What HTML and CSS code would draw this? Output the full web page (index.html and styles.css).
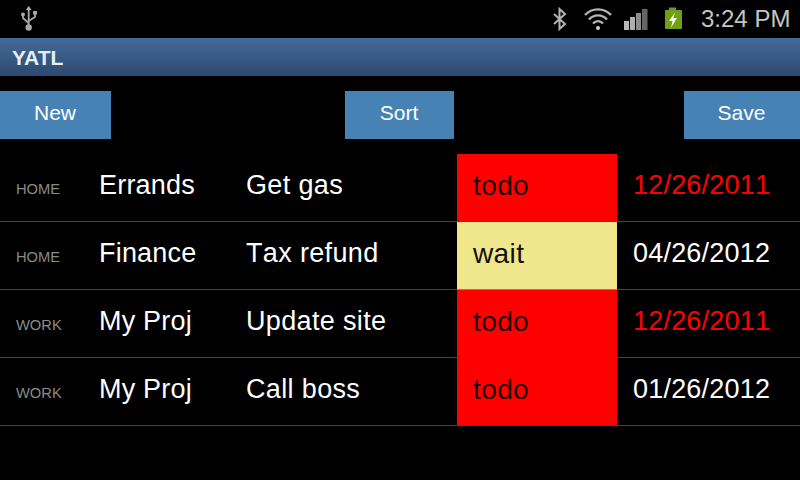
FILE: index.html
```html
<!DOCTYPE html>
<html lang="en">
<head>
    <meta charset="UTF-8">
    <meta name="viewport" content="width=device-width, initial-scale=1.0">
    <title>YATL</title>
    <link rel="stylesheet" href="styles.css">
</head>
<body>
    <div class="status-bar">
        <svg class="icon-usb" width="18" height="26" viewBox="0 0 18 26">
            <g fill="none" stroke="#a8a8a8" stroke-width="1.8">
                <path d="M8.7 3 V21"/>
                <path d="M3 9 V12 L8.7 17"/>
                <path d="M15 7 V11 L8.7 15"/>
            </g>
            <path d="M8.7 0 L5.8 4 H11.6 Z" fill="#b0b0b0"/>
            <circle cx="3" cy="8.5" r="2" fill="#a8a8a8"/>
            <rect x="13" y="5" width="4" height="3.6" fill="#a8a8a8"/>
            <circle cx="8.7" cy="21.5" r="3.2" fill="#a8a8a8"/>
        </svg>
        <svg class="icon-bt" width="14" height="24" viewBox="0 0 14 24">
            <path d="M1 7 L12 17 L6.5 22 V2 L12 7 L1 17" fill="none" stroke="#b4b4b4" stroke-width="2"/>
        </svg>
        <svg class="icon-wifi" width="28" height="24" viewBox="0 0 28 24">
            <g fill="none" stroke="#b4b4b4" stroke-width="2.4">
                <path d="M1 8 C8 0.5 20 0.5 27 8"/>
                <path d="M5 12.5 C10 7 18 7 23 12.5"/>
                <path d="M9 16.5 C12 13.5 16 13.5 19 16.5"/>
            </g>
            <circle cx="14" cy="21" r="2" fill="#d0d0d0"/>
        </svg>
        <svg class="icon-signal" width="25" height="24" viewBox="0 0 25 24">
            <rect x="0" y="14" width="5" height="9" fill="#b8b8b8"/>
            <rect x="6" y="10" width="5" height="13" fill="#b0b0b0"/>
            <rect x="12" y="6" width="5" height="17" fill="#8c8c8c"/>
            <rect x="18" y="2" width="5.5" height="21" fill="#666"/>
        </svg>
        <svg class="icon-battery" width="18" height="24" viewBox="0 0 18 24">
            <rect x="5" y="0.5" width="7" height="3" fill="#7c8660"/>
            <rect x="1" y="3" width="17" height="19" rx="1" fill="#6f9f12"/>
            <path d="M11 5.5 L5 14 H8.5 L7 21 L13 11 H9.5 Z" fill="#f6f9e8"/>
        </svg>
        <span class="clock">3:24 PM</span>
    </div>

    <div class="title-bar">YATL</div>

    <div class="toolbar">
        <button class="btn btn-new">New</button>
        <button class="btn btn-sort">Sort</button>
        <button class="btn btn-save">Save</button>
    </div>

    <div class="task-list">
        <div class="task-row">
            <span class="cat">HOME</span>
            <span class="project">Errands</span>
            <span class="task">Get gas</span>
            <span class="state todo">todo</span>
            <span class="due late">12/26/2011</span>
        </div>
        <div class="task-row">
            <span class="cat">HOME</span>
            <span class="project">Finance</span>
            <span class="task">Tax refund</span>
            <span class="state wait">wait</span>
            <span class="due">04/26/2012</span>
        </div>
        <div class="task-row">
            <span class="cat">WORK</span>
            <span class="project">My Proj</span>
            <span class="task">Update site</span>
            <span class="state todo">todo</span>
            <span class="due late">12/26/2011</span>
        </div>
        <div class="task-row">
            <span class="cat">WORK</span>
            <span class="project">My Proj</span>
            <span class="task">Call boss</span>
            <span class="state todo">todo</span>
            <span class="due">01/26/2012</span>
        </div>
    </div>
</body>
</html>
```

FILE: styles.css
```css
html, body {
    margin: 0;
    height: 480px;
    overflow: hidden;
}
body {
    background-color: #000;
    color: #fff;
    font-family: "Liberation Sans", Arial, sans-serif;
}
.status-bar {
    display: flex;
    align-items: center;
    height: 38px;
    padding-left: 20px;
    box-sizing: border-box;
}
.icon-usb {
    margin-right: 515px;
}
.icon-bt {
    margin-right: 17px;
}
.icon-wifi {
    margin-right: 12px;
}
.icon-signal {
    margin-right: 15px;
}
.icon-battery {
    margin-right: 19px;
}
.clock {
    font-size: 24px;
    color: #c4c4c4;
}
.title-bar {
    height: 38px;
    line-height: 40px;
    padding-left: 12px;
    box-sizing: border-box;
    background: linear-gradient(#446a98, #2c4a72);
    font-size: 21px;
    font-weight: bold;
    color: #e8eef4;
}
.toolbar {
    display: flex;
    margin-top: 15px;
    margin-bottom: 15px;
}
.btn {
    height: 48px;
    padding: 0 1px 4px 0;
    border: none;
    background-color: #4682b4;
    color: #fff;
    font-family: inherit;
    font-size: 21px;
}
.btn-new {
    width: 111px;
}
.btn-sort {
    width: 109px;
    margin-left: 234px;
}
.btn-save {
    width: 116px;
    margin-left: auto;
}
.task-row {
    display: grid;
    grid-template-columns: 99px 147px 211px 160px 1fr;
    align-items: center;
    height: 68px;
    box-sizing: border-box;
    border-bottom: 1px solid #444;
    font-size: 27px;
    font-kerning: none;
}
.task-row > span {
    padding-bottom: 4px;
}
.cat {
    padding-left: 16px;
    padding-top: 6px;
    font-size: 14.7px;
    color: #8a8a8a;
}
.project {
    letter-spacing: 0.2px;
}
.task {
    letter-spacing: 0.35px;
}
.task-row > .state {
    align-self: stretch;
    display: flex;
    align-items: center;
    margin-bottom: -1px;
    padding-left: 16px;
    border-bottom: 1px solid rgba(68, 68, 68, 0.6);
    font-size: 28px;
    letter-spacing: 0.4px;
}
.todo {
    background-color: #f00;
    color: #1a0000;
}
.wait {
    background-color: #f0e68c;
    color: #111;
}
.due {
    padding-left: 16px;
    letter-spacing: 0.2px;
}
.late {
    color: #f00;
}
```
